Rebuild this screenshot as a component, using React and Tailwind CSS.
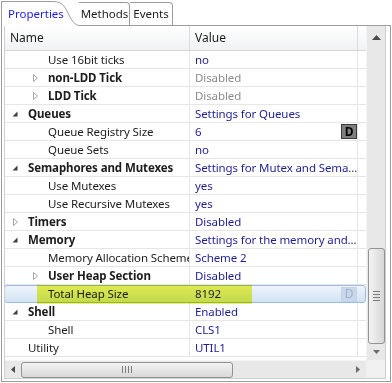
import React from "react";

const rows = [
  { name: "Use 16bit ticks", level: 1, value: "no" },
  { name: "non-LDD Tick", level: 1, bold: true, exp: "closed", value: "Disabled", muted: true },
  { name: "LDD Tick", level: 1, bold: true, exp: "closed", value: "Disabled", muted: true },
  { name: "Queues", level: 0, bold: true, exp: "open", value: "Settings for Queues" },
  { name: "Queue Registry Size", level: 1, value: "6", btn: "dark" },
  { name: "Queue Sets", level: 1, value: "no" },
  { name: "Semaphores and Mutexes", level: 0, bold: true, exp: "open", value: "Settings for Mutex and Sema..." },
  { name: "Use Mutexes", level: 1, value: "yes" },
  { name: "Use Recursive Mutexes", level: 1, value: "yes" },
  { name: "Timers", level: 0, bold: true, exp: "closed", value: "Disabled" },
  { name: "Memory", level: 0, bold: true, exp: "open", value: "Settings for the memory and..." },
  { name: "Memory Allocation Scheme", level: 1, value: "Scheme 2" },
  { name: "User Heap Section", level: 1, bold: true, exp: "closed", value: "Disabled" },
  { name: "Total Heap Size", level: 1, value: "8192", btn: "light", selected: true },
  { name: "Shell", level: 0, bold: true, exp: "open", value: "Enabled" },
  { name: "Shell", level: 1, value: "CLS1" },
  { name: "Utility", level: 0, value: "UTIL1" },
];

const Expander = ({ state }) => {
  if (state === "open") {
    return (
      <svg width="10" height="10" viewBox="0 0 10 10">
        <path d="M7.5 2.5 L7.5 7.5 L2.5 7.5 Z" fill="#3c3c3c" />
      </svg>
    );
  }
  if (state === "closed") {
    return (
      <svg width="10" height="10" viewBox="0 0 10 10">
        <path d="M3.5 1.5 L7.5 5 L3.5 8.5 Z" fill="#fff" stroke="#a6a6a6" strokeWidth="1" />
      </svg>
    );
  }
  return null;
};

const DButton = ({ kind }) =>
  kind === "dark" ? (
    <div className="w-[16px] h-[15px] shrink-0 bg-[#7f7f7f] border border-[#3a3a3a] flex items-center justify-center font-bold text-[12px] text-black leading-none">
      D
    </div>
  ) : (
    <div className="w-[16px] h-[15px] shrink-0 bg-[#c8d8ea] border border-[#c3d3e5] flex items-center justify-center text-[12px] text-[#9fb1c6] leading-none">
      D
    </div>
  );

const Row = ({ row }) => {
  const line = row.selected ? "border-transparent" : "border-[#e6e6e6]";
  return (
    <div
      className={
        "flex h-[18px] tracking-[-0.1px] " +
        (row.selected
          ? "rounded-[3px] border border-[#9dbbe0] bg-gradient-to-b from-[#eef4fc] to-[#d2e2f4] -ml-px"
          : "border-b border-[#e6e6e6]")
      }
    >
      <div
        className={
          "w-[185px] shrink-0 border-r flex items-center overflow-hidden whitespace-nowrap " +
          line +
          (row.level === 0 ? " pl-[5px]" : " pl-[25px]")
        }
      >
        <div className="w-[10px] shrink-0 flex items-center justify-center">
          <Expander state={row.exp} />
        </div>
        <span
          className={
            "ml-[8px] text-[#1c1c1c] " + (row.bold ? "font-bold" : "")
          }
        >
          {row.name}
        </span>
      </div>
      <div
        className={
          "w-[168px] shrink-0 border-r flex items-center justify-between pl-[5px] overflow-hidden whitespace-nowrap " +
          line
        }
      >
        <span className={row.muted ? "text-[#8c8c8c]" : "text-[#1e1e92]"}>
          {row.value}
        </span>
        {row.btn && <DButton kind={row.btn} />}
      </div>
      <div className="flex-1" />
    </div>
  );
};

const VScroll = () => (
  <div className="w-[19px] shrink-0 bg-[#e8e8e8] border-l border-[#f4f4f4] flex flex-col items-center">
    <div className="h-[20px] w-full flex items-center justify-center pt-[2px]">
      <svg width="9" height="5" viewBox="0 0 9 5">
        <path d="M4.5 0 L9 5 L0 5 Z" fill="#4a4a4a" />
      </svg>
    </div>
    <div className="flex-1 w-full" />
    <div className="h-[96px] w-[17px] rounded-[3px] border border-[#929292] bg-gradient-to-r from-[#f3f3f3] to-[#d8d8d8] flex flex-col items-center justify-center gap-[2px]">
      <div className="w-[7px] h-px bg-[#7a7a7a]" />
      <div className="w-[7px] h-px bg-[#7a7a7a]" />
      <div className="w-[7px] h-px bg-[#7a7a7a]" />
      <div className="w-[7px] h-px bg-[#7a7a7a]" />
    </div>
    <div className="h-[16px] w-full flex items-center justify-center">
      <svg width="7" height="4" viewBox="0 0 7 4">
        <path d="M0 0 L7 0 L3.5 4 Z" fill="#6a6a6a" />
      </svg>
    </div>
  </div>
);

const HScroll = () => (
  <div className="h-[18px] flex">
    <div className="flex-1 bg-[#e8e8e8] border-t border-[#f4f4f4] flex items-center">
      <div className="w-[16px] flex items-center justify-center">
        <svg width="4" height="7" viewBox="0 0 4 7">
          <path d="M4 0 L4 7 L0 3.5 Z" fill="#4a4a4a" />
        </svg>
      </div>
      <div className="w-[212px] h-[16px] rounded-[3px] border border-[#929292] bg-gradient-to-b from-[#f3f3f3] to-[#d8d8d8] flex items-center justify-center gap-[2px]">
        <div className="h-[7px] w-px bg-[#7a7a7a]" />
        <div className="h-[7px] w-px bg-[#7a7a7a]" />
        <div className="h-[7px] w-px bg-[#7a7a7a]" />
        <div className="h-[7px] w-px bg-[#7a7a7a]" />
      </div>
      <div className="flex-1" />
      <div className="w-[16px] flex items-center justify-center">
        <svg width="4" height="7" viewBox="0 0 4 7">
          <path d="M0 0 L4 3.5 L0 7 Z" fill="#6a6a6a" />
        </svg>
      </div>
    </div>
    <div className="w-[19px] bg-[#f0f0f0]" />
  </div>
);

export default function App() {
  return (
    <div
      className="relative w-[392px] h-[383px] bg-white overflow-hidden text-[11.5px]"
      style={{ fontFamily: '"Segoe UI", "Noto Sans", sans-serif' }}
    >
      {/* tabs */}
      <div className="flex h-[26px] ml-px">
        <div className="w-[52px] border-t border-l border-[#9c9c9c] mt-px flex items-center pl-[6px] text-[#1a1aee] whitespace-nowrap">
          Properties
        </div>
        <svg width="26" height="25" viewBox="0 0 26 25" className="shrink-0 mt-px">
          <path d="M0 0.5 C 10 0.5, 12 6, 16 14 C 19 20, 22 24, 26 24.5" fill="none" stroke="#9c9c9c" strokeWidth="1" />
        </svg>
        <div className="w-[51px] border-t border-r border-b border-[#9c9c9c] rounded-tr-[4px] mt-[2px] flex items-center justify-center pl-px text-[#1c1c1c]">
          Methods
        </div>
        <div className="w-[43px] border-t border-r border-b border-[#9c9c9c] rounded-tr-[4px] mt-[2px] flex items-center justify-center text-[#1c1c1c]">
          Events
        </div>
        <div className="flex-1 border-b border-[#9c9c9c] mr-px" />
      </div>

      {/* view frame */}
      <div className="ml-px mr-px h-[356px] border-l border-r border-b border-[#9c9c9c] pl-[2px] pr-[4px] pb-[2px]">
        <div className="h-full border-l border-r border-b border-[#cfcfcf] flex flex-col">
          <div className="flex-1 flex min-h-0">
            <div className="flex-1 flex flex-col overflow-hidden">
              {/* header */}
              <div className="flex h-[25px] shrink-0 border-b border-[#d5d5d5] bg-gradient-to-b from-white to-[#f1f2f4]">
                <div className="w-[185px] shrink-0 border-r border-[#dcdcdc] flex items-center pl-[5px] text-[12px] text-[#1c1c1c]">
                  Name
                </div>
                <div className="w-[168px] shrink-0 border-r border-[#dcdcdc] flex items-center pl-[5px] text-[12px] text-[#1c1c1c]">
                  Value
                </div>
                <div className="flex-1" />
              </div>
              {rows.map((r, i) => (
                <Row key={i} row={r} />
              ))}
            </div>
            <VScroll />
          </div>
          <HScroll />
        </div>
      </div>

      {/* highlighter mark */}
      <div className="absolute left-[37px] top-[285px] w-[215px] h-[19px] bg-[#eef552] mix-blend-multiply blur-[0.6px]" />
    </div>
  );
}
